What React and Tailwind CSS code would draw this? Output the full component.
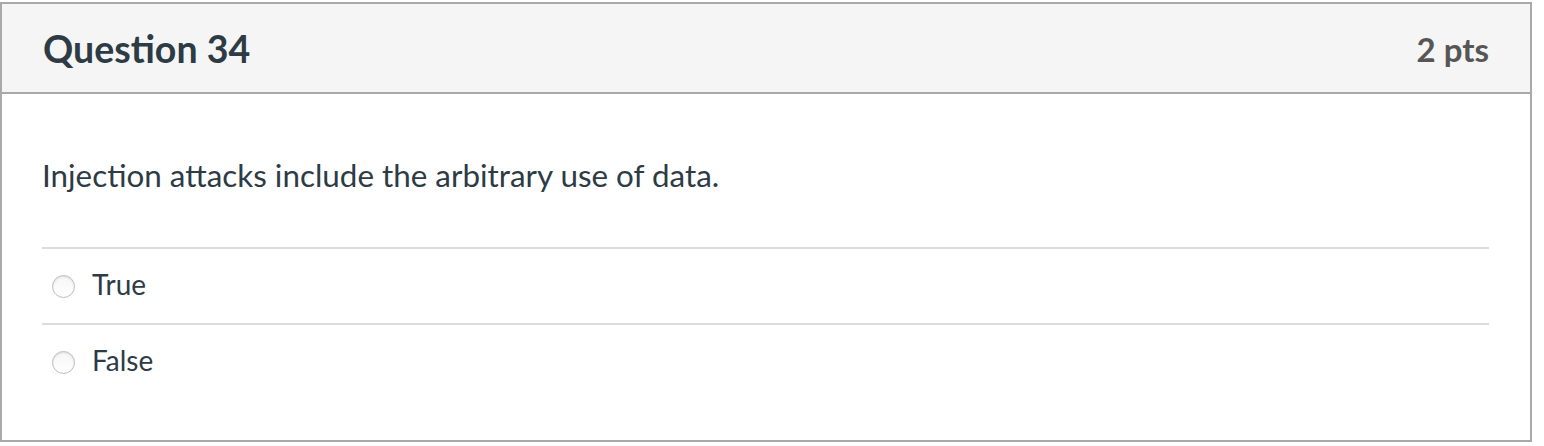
export default function App() {
  const options = ["True", "False"];

  return (
    <div className="min-h-screen bg-white pt-[2px]" style={{ fontFamily: "Lato, 'Open Sans', sans-serif" }}>
      <div className="w-[1532px] h-[440px] border-2 border-[#a9a9a9] bg-white flex flex-col">
        {/* Header */}
        <div className="h-[90px] shrink-0 bg-[#f5f5f5] border-b-2 border-[#a9a9a9] flex items-center justify-between pl-[41px] pr-[41px]">
          <h2 className="text-[37.5px] font-bold text-[#2d3b45] leading-none pt-[2px]">Question 34</h2>
          <span className="text-[33px] font-bold text-[#565656] leading-none pt-[2px]">2 pts</span>
        </div>

        {/* Body */}
        <div className="px-[40px] pt-[59px] pr-[41px]">
          <p className="text-[31.4px] leading-[45px] text-[#2d3b45]">
            Injection attacks include the arbitrary use of data.
          </p>

          <div className="mt-[49px]">
            {options.map((opt) => (
              <div key={opt} className="border-t-2 border-[#dcdcdc] h-[76px] flex items-center pl-[10px]">
                <span className="w-[23px] h-[23px] rounded-full border border-[#bdbdbd] bg-gradient-to-b from-[#f6f6f6] to-white shadow-[inset_0_1px_2px_rgba(0,0,0,0.1)] shrink-0" />
                <span className="ml-[17px] text-[28px] leading-none text-[#2d3b45] pb-[4px]">{opt}</span>
              </div>
            ))}
          </div>
        </div>
      </div>
    </div>
  );
}
